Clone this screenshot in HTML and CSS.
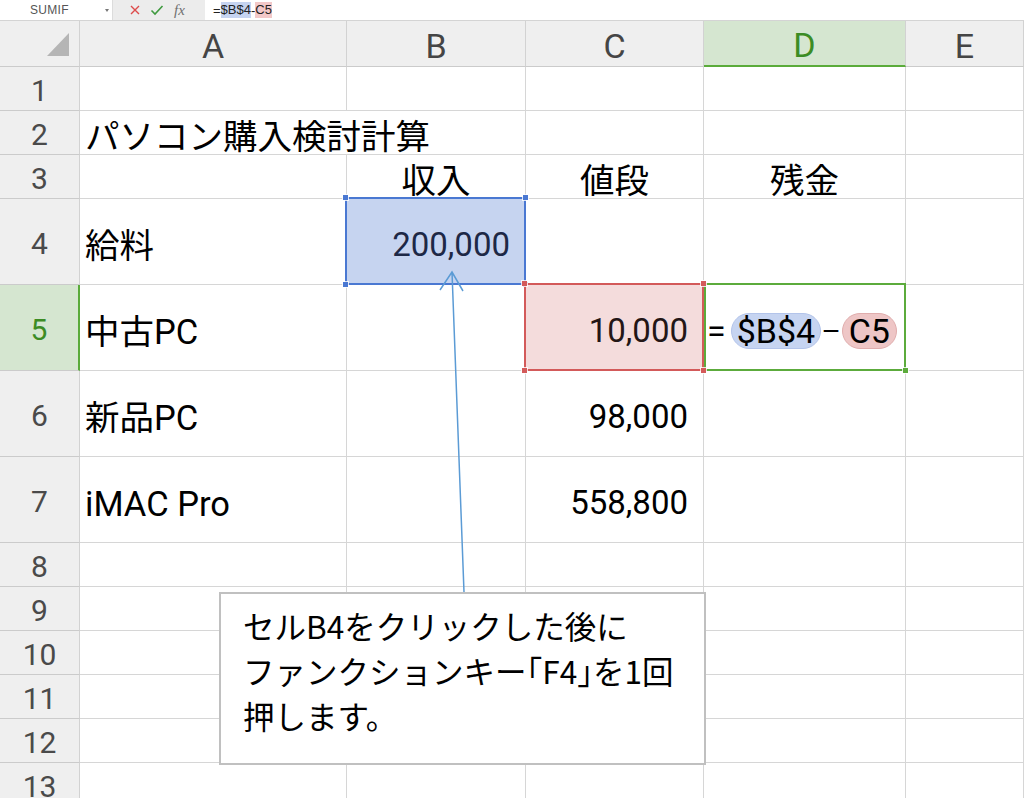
FILE: index.html
```html
<!DOCTYPE html>
<html lang="ja">
<head>
<meta charset="utf-8">
<title>パソコン購入検討計算</title>
<link rel="stylesheet" href="styles.css">
</head>
<body>
<div class="fbar">
  <div class="namebox"><span class="nm">SUMIF</span><span class="dd"></span></div>
  <div class="fbtns">
    <svg class="ico" width="12" height="12" viewBox="0 0 12 12"><path d="M2 2 L10 10 M10 2 L2 10" stroke="#dd4b4b" stroke-width="1.4" fill="none"/></svg>
    <svg class="ico" width="14" height="12" viewBox="0 0 14 12"><path d="M1.5 6.5 L5 10 L12.5 2" stroke="#3f9a3f" stroke-width="1.6" fill="none"/></svg>
    <i class="fx">fx</i>
  </div>
  <div class="finput">=<span class="hb">$B$4</span>-<span class="hp">C5</span></div>
</div>

<div class="sheet">
  <!-- header row -->
  <div class="c hd corner"><svg width="22" height="23" viewBox="0 0 22 23"><polygon points="22,0 22,23 0,23" fill="#b5b5b5"/></svg></div>
  <div class="c hd ch">A</div>
  <div class="c hd ch">B</div>
  <div class="c hd ch">C</div>
  <div class="c hd ch act-col">D</div>
  <div class="c hd ch">E</div>

  <!-- 1 -->
  <div class="c hd rh">1</div>
  <div class="c"></div><div class="c"></div><div class="c"></div><div class="c"></div><div class="c"></div>

  <!-- 2 -->
  <div class="c hd rh">2</div>
  <div class="c span2 txt">パソコン購入検討計算</div>
  <div class="c"></div><div class="c"></div><div class="c"></div>

  <!-- 3 -->
  <div class="c hd rh">3</div>
  <div class="c"></div>
  <div class="c ctr">収入</div>
  <div class="c ctr">値段</div>
  <div class="c ctr">残金</div>
  <div class="c"></div>

  <!-- 4 -->
  <div class="c hd rh">4</div>
  <div class="c txt">給料</div>
  <div class="c num sel sel-blue">200,000<span class="h tl"></span><span class="h tr"></span><span class="h bl"></span><span class="h br"></span></div>
  <div class="c"></div><div class="c"></div><div class="c"></div>

  <!-- 5 -->
  <div class="c hd rh act-row">5</div>
  <div class="c txt">中古PC</div>
  <div class="c"></div>
  <div class="c num sel sel-red">10,000<span class="h tl"></span><span class="h tr"></span><span class="h bl"></span><span class="h br"></span></div>
  <div class="c fcell sel sel-green">=<span class="pill pb">$B$4</span><span class="minus">−</span><span class="pill pp">C5</span><span class="h br"></span></div>
  <div class="c"></div>

  <!-- 6 -->
  <div class="c hd rh">6</div>
  <div class="c txt">新品PC</div>
  <div class="c"></div>
  <div class="c num">98,000</div>
  <div class="c"></div><div class="c"></div>

  <!-- 7 -->
  <div class="c hd rh">7</div>
  <div class="c txt">iMAC Pro</div>
  <div class="c"></div>
  <div class="c num">558,800</div>
  <div class="c"></div><div class="c"></div>

  <div class="c hd rh">8</div>
  <div class="c"></div><div class="c"></div><div class="c"></div><div class="c"></div><div class="c"></div>
  <div class="c hd rh">9</div>
  <div class="c"></div><div class="c"></div><div class="c"></div><div class="c"></div><div class="c"></div>
  <div class="c hd rh">10</div>
  <div class="c"></div><div class="c"></div><div class="c"></div><div class="c"></div><div class="c"></div>
  <div class="c hd rh">11</div>
  <div class="c"></div><div class="c"></div><div class="c"></div><div class="c"></div><div class="c"></div>
  <div class="c hd rh">12</div>
  <div class="c"></div><div class="c"></div><div class="c"></div><div class="c"></div><div class="c"></div>
  <div class="c hd rh">13</div>
  <div class="c"></div><div class="c"></div><div class="c"></div><div class="c"></div><div class="c"></div>
</div>

<svg class="arrow" width="1024" height="798" viewBox="0 0 1024 798">
  <path d="M464 592 L452 272 M440 290 L452 272 L463 291" stroke="#5b9bd5" stroke-width="1.5" fill="none"/>
</svg>

<div class="callout">セルB4をクリックした後に<br>ファンクションキー<span class="br2">「</span>F4<span class="br2">」</span>を1回<br>押します。</div>
</body>
</html>
```
FILE: styles.css
```css
html, body {
  margin: 0;
  padding: 0;
  width: 1024px;
  height: 798px;
  overflow: hidden;
  background: #ffffff;
}

body {
  position: relative;
  font-family: "Roboto", "Noto Sans CJK JP", sans-serif;
}

/* formula bar */
.fbar {
  display: flex;
  height: 20px;
  border-bottom: 1px solid #d4d4d4;
  background: #ececec;
  font-family: "Liberation Sans", Arial, sans-serif;
}

.namebox {
  width: 113px;
  background: #ffffff;
  display: flex;
  align-items: center;
  position: relative;
  box-sizing: border-box;
  border-right: 1px solid #dcdcdc;
}

.nm {
  font-size: 12px;
  color: #555555;
  margin-left: 30px;
  letter-spacing: 0.3px;
}

.dd {
  position: absolute;
  left: 105px;
  top: 9px;
  width: 0;
  height: 0;
  border-left: 2.5px solid transparent;
  border-right: 2.5px solid transparent;
  border-top: 3px solid #777777;
}

.fbtns {
  width: 92px;
  display: flex;
  align-items: center;
  padding-left: 16px;
  box-sizing: border-box;
  gap: 9px;
}

.ico {
  display: block;
}

.fx {
  font-family: "Liberation Serif", "Times New Roman", serif;
  font-size: 15px;
  color: #707070;
  margin-left: 1px;
  line-height: 20px;
}

.finput {
  flex: 1;
  background: #ffffff;
  display: flex;
  align-items: center;
  padding-left: 8px;
  font-size: 13px;
  color: #222222;
}

.hb {
  background: #c6d4f0;
  line-height: 16px;
}

.hp {
  background: #f2c8c8;
  line-height: 16px;
}

/* sheet grid */
.sheet {
  display: grid;
  grid-template-columns: 80px 267px 179px 178px 202px 1fr;
  grid-template-rows: 46px 44px 44px 44px 86px 86px 86px 86px 44px 44px 44px 44px 44px 44px;
}

.c {
  box-sizing: border-box;
  border-right: 1px solid #d6d6d6;
  border-bottom: 1px solid #d6d6d6;
  display: flex;
  align-items: center;
  font-size: 33px;
  line-height: 40px;
  color: #000000;
  white-space: nowrap;
  padding-top: 6px;
}

.hd {
  background: #efefef;
  color: #454545;
  border-right-color: #d2d2d2;
  border-bottom-color: #cbcbcb;
  padding-top: 4px;
}

.corner {
  justify-content: flex-end;
  align-items: flex-end;
  padding: 0 10px 10px 0;
}

.corner svg {
  display: block;
}

.ch {
  justify-content: center;
  font-size: 34px;
}

.rh {
  justify-content: center;
  font-size: 30px;
  color: #4a4a4a;
}

.act-col {
  background: #d5e6d0;
  color: #3c8c24;
  border-bottom: 2px solid #5aab3a;
}

.act-row {
  background: #d5e6d0;
  color: #3c8c24;
  border-right: 2px solid #5aab3a;
}

.span2 {
  grid-column: span 2;
}

.txt {
  padding-left: 5px;
  font-size: 34.5px;
  padding-top: 8px;
}

.ctr {
  justify-content: center;
  font-size: 34.5px;
  padding-top: 8px;
}

.num {
  justify-content: flex-end;
  padding-right: 15px;
}

/* selections */
.sel {
  position: relative;
  z-index: 1;
}

.sel::after {
  content: "";
  position: absolute;
  top: -2px;
  left: -2px;
  right: -1px;
  bottom: -1px;
  border: 2px solid transparent;
  pointer-events: none;
}

.sel-blue {
  background: #c6d4f0;
  color: #1d2846;
}

.sel-blue::after {
  border-color: #4a78d2;
}

.sel-red {
  background: #f4dcdc;
  color: #231616;
  z-index: 2;
}

.sel-red::after {
  border-color: #d35a5a;
}

.sel-green::after {
  left: 0;
  border-color: #5cab3c;
}

.h {
  position: absolute;
  width: 5px;
  height: 5px;
  z-index: 3;
  box-shadow: 0 0 0 1px rgba(255, 255, 255, 0.8);
}

.sel-blue .h { background: #4a78d2; }
.sel-red .h { background: #d35a5a; }
.sel-green .h { background: #5cab3c; }

.h.tl { left: -4px; top: -4px; }
.h.tr { right: -3px; top: -4px; }
.h.bl { left: -4px; bottom: -3px; }
.h.br { right: -3px; bottom: -3px; }

.fcell {
  padding-left: 3px;
  font-size: 34px;
}

.pill {
  display: inline-flex;
  align-items: center;
  height: 36px;
  border-radius: 18px;
  box-sizing: border-box;
}

.pb {
  background: #c6d4f1;
  border: 1px solid #b3c4ea;
  padding: 0 5px;
  margin-left: 5px;
}

.pp {
  background: #eec6c6;
  border: 1px solid #e0adad;
  padding: 0 6px;
}

.minus {
  font-family: "Liberation Sans", Arial, sans-serif;
  font-size: 30px;
  margin: 0 2px 0 1px;
}

/* arrow + callout overlays */
.arrow {
  position: absolute;
  left: 0;
  top: 0;
  z-index: 5;
  pointer-events: none;
}

.callout {
  position: absolute;
  left: 219px;
  top: 592px;
  width: 487px;
  height: 173px;
  box-sizing: border-box;
  background: #ffffff;
  border: 2px solid #c0c0c0;
  padding: 9px 0 0 22px;
  font-family: "Noto Sans CJK JP", sans-serif;
  font-size: 31.5px;
  line-height: 45px;
  color: #000000;
  z-index: 6;
  white-space: nowrap;
}

.br2 {
  font-feature-settings: "halt" 1;
}
```
